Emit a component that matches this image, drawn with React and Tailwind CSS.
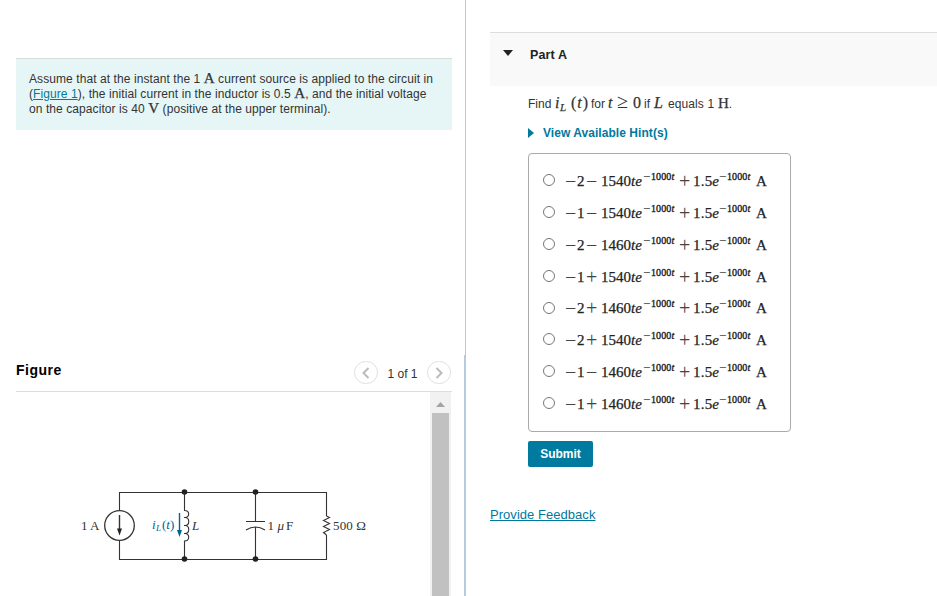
import { useState } from 'react';

const OPTIONS = [
  ['2', '−', '1540'],
  ['1', '−', '1540'],
  ['2', '−', '1460'],
  ['1', '+', '1540'],
  ['2', '+', '1460'],
  ['2', '+', '1540'],
  ['1', '−', '1460'],
  ['1', '+', '1460'],
];

const MATH = "font-['Liberation_Serif',serif] [-webkit-text-stroke:0.25px_currentColor]";
const OP = 'shrink-0 text-[20px] text-[#444] [-webkit-text-stroke:0]';

function Sup() {
  return (
    <span className="flex items-center w-[37px] shrink-0 -mt-[8px] text-[10px] [-webkit-text-stroke:0.35px_currentColor]">
      <span className="w-2 text-[13px] [-webkit-text-stroke:0]">−</span>
      <span className="tracking-[0.1px]">1000<i>t</i></span>
    </span>
  );
}

function Option({ parts, checked, onSelect }) {
  const [first, op, coef] = parts;
  return (
    <label className="flex items-center h-[31.8px] cursor-pointer">
      <input
        type="radio"
        name="answer"
        checked={checked}
        onChange={onSelect}
        className="appearance-none shrink-0 w-3 h-3 -mt-px rounded-full border border-[#777] bg-white checked:border-4"
      />
      <span className={`${MATH} flex items-center ml-[10px] mt-[0.5px] text-[15px] leading-4 text-[#222] whitespace-nowrap`}>
        <span className={`${OP} w-[12px]`}>−</span>
        <span className="w-[9px]">{first}</span>
        <span className={`${OP} w-[15px]`}>{op}</span>
        <span className="w-[42px]">{coef}<i>te</i></span>
        <Sup />
        <span className={`${OP} w-[14px] -ml-px`}>+</span>
        <span className="w-[26px] tracking-[0.2px]">1.5<i>e</i></span>
        <Sup />
        <span>A</span>
      </span>
    </label>
  );
}

function Circuit() {
  return (
    <svg width="300" height="84" viewBox="76 484 300 84" fill="none" stroke="#333" strokeWidth="1.1" className="font-['Liberation_Serif',serif]">
      <path d="M119.5 510V492.5H326.5V516M119.5 541V559.5H326.5V535" />
      <circle cx="119.5" cy="525.5" r="14.8" strokeWidth="1.3" />
      <path d="M119.5 515V530" strokeWidth="1.4" />
      <path d="M117 528.5h5l-2.5 7z" fill="#222" stroke="none" />
      <path d="M184.5 492V510.5C190 510.5 190 517.5 185 517.5C190 517.5 190 525.5 185 525.5C190 525.5 190 533.5 185 533.5C190 533.5 190 541 184.5 541V559M187 517.5H184M187 525.5H184M187 533.5H184" />
      <path d="M255.5 492V521.500M246 521.500H265M246 530q9.500-6 19 0M255.500 527V559" />
      <path d="M326.500 516l3 1.500-6 3 6 3-6 3 6 3-6 3 3 2.500" />
      <g fill="#222" stroke="none">
        <circle cx="184.500" cy="492" r="2.800" />
        <circle cx="184.500" cy="559" r="2.800" />
        <circle cx="255.500" cy="492" r="2.800" />
        <circle cx="255.500" cy="559" r="2.800" />
      </g>
      <path d="M179.500 513V532" stroke="#00638b" strokeWidth="1.4" />
      <path d="M177 530h5l-2.500 7z" fill="#00638b" stroke="none" />
      <g fill="#333" stroke="none" fontSize="13">
        <text x="81" y="530">1 A</text>
        <text x="192" y="530" fontStyle="italic">L</text>
        <text x="267.500" y="530">1</text>
        <text x="277.500" y="530" fontStyle="italic">μ</text>
        <text x="286" y="530">F</text>
        <text x="333" y="530" textLength="33">500 Ω</text>
        <g fill="#00638b">
          <text x="152" y="529" fontStyle="italic">i</text>
          <text x="156" y="531" fontSize="9" fontStyle="italic">L</text>
          <text x="162" y="529">(<tspan fontStyle="italic">t</tspan>)</text>
        </g>
      </g>
    </svg>
  );
}

function PagerButton({ label, d }) {
  return (
    <button aria-label={label} className="flex items-center justify-center w-6 h-[23px] rounded-full border border-[#e0e0e0]">
      <svg width="8" height="12" viewBox="0 0 8 12" fill="none" stroke="#bbb" strokeWidth="2">
        <path d={d} />
      </svg>
    </button>
  );
}

function Unit({ children }) {
  return <span className={`${MATH} text-[15px] leading-3`}>{children}</span>;
}

export default function App() {
  const [selected, setSelected] = useState(null);

  return (
    <div className="flex w-[937px] h-[596px] overflow-hidden bg-white font-['Liberation_Sans',Arial,sans-serif] text-[12px] text-[#333]">
      <div className="flex flex-col w-[464px] shrink-0 pl-4 pr-3">
        <div className="mt-[58px] h-[72px] border-t border-[#d6dcdc] bg-[#e6f6f7] pl-[13px] pt-[13px] leading-[15px] whitespace-nowrap">
          <p className="tracking-[0.08px]">
            Assume that at the instant the 1 <Unit>A</Unit> current source is applied to the circuit in
          </p>
          <p className="tracking-[0.08px]">
            (<a href="#figure" className="text-[#00799e] underline">Figure 1</a>), the initial current in the inductor is 0.5 <Unit>A</Unit>, and the initial voltage
          </p>
          <p className="tracking-[0.08px]">
            on the capacitor is 40 <Unit>V</Unit> (positive at the upper terminal).
          </p>
        </div>

        <div className="flex items-start justify-between mt-[229px] h-[33px] border-b border-[#ddd] pr-px pt-px">
          <h2 className="text-[14px] leading-5 font-bold text-black tracking-[0.5px]">Figure</h2>
          <div className="flex items-center mt-px">
            <PagerButton label="Previous" d="M6.500 1L1.500 6l5 5" />
            <span className="w-[49px] text-center pt-[2px]">1 of 1</span>
            <PagerButton label="Next" d="M1.500 1l5 5-5 5" />
          </div>
        </div>

        <div id="figure" className="flex justify-between grow">
          <div className="pl-[60px] pt-[92px]">
            <Circuit />
          </div>
          <div className="flex flex-col items-center w-[21px] mr-px bg-[#f1f1f1]">
            <svg width="9" height="5" viewBox="0 0 9 5" className="mt-[10px] mb-[6px] shrink-0">
              <path d="M0 5L4.500 0L9 5z" fill="#a3a3a3" />
            </svg>
            <div className="w-[17px] grow bg-[#c1c1c1]" />
          </div>
        </div>
      </div>

      <div className="flex flex-col w-[2px] shrink-0">
        <div className="w-px h-[355px] ml-px bg-[#c0c6d4]" />
        <div className="grow bg-[#b8cadd]" />
      </div>

      <div className="grow pl-6">
        <div className="flex mt-8 h-[54px] border-t border-[#ddd] bg-[#f9f9f9] pl-[13px] pt-[14px]">
          <svg width="10" height="6" viewBox="0 0 10 6" className="mt-[3px]">
            <path d="M0 0H10L5 6z" fill="#222" />
          </svg>
          <h3 className="ml-[17px] text-[12.5px] leading-4 font-bold text-[#222] tracking-[0.15px]">Part A</h3>
        </div>

        <div className="pl-[38px]">
          <p className="flex items-baseline mt-[7px] h-5 leading-[18px] whitespace-nowrap">
            <span className="w-[27px]">Find</span>
            <span className={`${MATH} flex items-baseline w-9 text-[16px] leading-4`}>
              <i className="w-[5px]">i</i>
              <i className="relative top-[3px] w-[11px] text-[11px]">L</i>
              (<i className="mx-px">t</i>)
            </span>
            <span className="w-[17px]">for</span>
            <span className={`${MATH} flex items-baseline w-9 text-[16px] leading-4`}>
              <i className="w-[9px]">t</i>
              <span className="w-4 text-[20px] [-webkit-text-stroke:0]">≥</span>
              0
            </span>
            <span className="w-[10px]">if</span>
            <i className={`${MATH} w-[14px] text-[16px] leading-4`}>L</i>
            <span className="w-[50px] tracking-[0.1px]">equals 1</span>
            <Unit>H</Unit>.
          </p>

          <button className="flex items-center mt-3 h-4 font-bold text-[#00799e] tracking-[0.05px]">
            <svg width="6" height="10" viewBox="0 0 6 10" className="-mt-px">
              <path d="M0 0L6 5L0 10z" fill="#00799e" />
            </svg>
            <span className="ml-[9px]">View Available Hint(s)</span>
          </button>

          <div className="mt-3 w-[263px] h-[279px] rounded border border-[#aaa] pl-[14px] pt-[11px]">
            {OPTIONS.map((parts, i) => (
              <Option key={i} parts={parts} checked={selected === i} onSelect={() => setSelected(i)} />
            ))}
          </div>

          <button className="mt-[9px] w-[65px] h-[26px] rounded-[2px] bg-[#007a9e] text-[12px] font-bold text-white">
            Submit
          </button>
        </div>

        <a href="#feedback" className="inline-block mt-[38px] text-[13px] leading-5 tracking-[0.04px] text-[#00799e] underline">
          Provide Feedback
        </a>
      </div>
    </div>
  );
}
